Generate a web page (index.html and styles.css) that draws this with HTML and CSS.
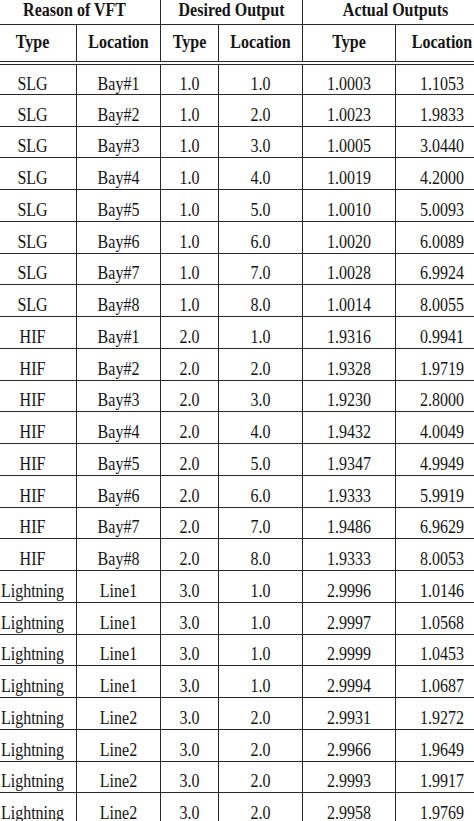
FILE: index.html
```html
<!DOCTYPE html>
<html>
<head>
<meta charset="utf-8">
<link rel="stylesheet" href="styles.css">
</head>
<body>
<table class="vft">
  <colgroup>
    <col class="c-type1"><col class="c-loc1"><col class="c-type2"><col class="c-loc2"><col class="c-type3"><col class="c-loc3">
  </colgroup>
  <thead>
    <tr class="h1">
      <th colspan="2"><span>Reason of VFT</span></th>
      <th colspan="2"><span>Desired Output</span></th>
      <th colspan="2"><span>Actual Outputs</span></th>
    </tr>
    <tr class="h2">
      <th><span>Type</span></th><th><span>Location</span></th><th><span>Type</span></th><th><span>Location</span></th><th><span>Type</span></th><th><span>Location</span></th>
    </tr>
  </thead>
  <tbody>
    <tr><td><span>SLG</span></td><td><span>Bay#1</span></td><td><span>1.0</span></td><td><span>1.0</span></td><td><span>1.0003</span></td><td><span>1.1053</span></td></tr>
    <tr><td><span>SLG</span></td><td><span>Bay#2</span></td><td><span>1.0</span></td><td><span>2.0</span></td><td><span>1.0023</span></td><td><span>1.9833</span></td></tr>
    <tr><td><span>SLG</span></td><td><span>Bay#3</span></td><td><span>1.0</span></td><td><span>3.0</span></td><td><span>1.0005</span></td><td><span>3.0440</span></td></tr>
    <tr><td><span>SLG</span></td><td><span>Bay#4</span></td><td><span>1.0</span></td><td><span>4.0</span></td><td><span>1.0019</span></td><td><span>4.2000</span></td></tr>
    <tr><td><span>SLG</span></td><td><span>Bay#5</span></td><td><span>1.0</span></td><td><span>5.0</span></td><td><span>1.0010</span></td><td><span>5.0093</span></td></tr>
    <tr><td><span>SLG</span></td><td><span>Bay#6</span></td><td><span>1.0</span></td><td><span>6.0</span></td><td><span>1.0020</span></td><td><span>6.0089</span></td></tr>
    <tr><td><span>SLG</span></td><td><span>Bay#7</span></td><td><span>1.0</span></td><td><span>7.0</span></td><td><span>1.0028</span></td><td><span>6.9924</span></td></tr>
    <tr><td><span>SLG</span></td><td><span>Bay#8</span></td><td><span>1.0</span></td><td><span>8.0</span></td><td><span>1.0014</span></td><td><span>8.0055</span></td></tr>
    <tr><td><span>HIF</span></td><td><span>Bay#1</span></td><td><span>2.0</span></td><td><span>1.0</span></td><td><span>1.9316</span></td><td><span>0.9941</span></td></tr>
    <tr><td><span>HIF</span></td><td><span>Bay#2</span></td><td><span>2.0</span></td><td><span>2.0</span></td><td><span>1.9328</span></td><td><span>1.9719</span></td></tr>
    <tr><td><span>HIF</span></td><td><span>Bay#3</span></td><td><span>2.0</span></td><td><span>3.0</span></td><td><span>1.9230</span></td><td><span>2.8000</span></td></tr>
    <tr><td><span>HIF</span></td><td><span>Bay#4</span></td><td><span>2.0</span></td><td><span>4.0</span></td><td><span>1.9432</span></td><td><span>4.0049</span></td></tr>
    <tr><td><span>HIF</span></td><td><span>Bay#5</span></td><td><span>2.0</span></td><td><span>5.0</span></td><td><span>1.9347</span></td><td><span>4.9949</span></td></tr>
    <tr><td><span>HIF</span></td><td><span>Bay#6</span></td><td><span>2.0</span></td><td><span>6.0</span></td><td><span>1.9333</span></td><td><span>5.9919</span></td></tr>
    <tr><td><span>HIF</span></td><td><span>Bay#7</span></td><td><span>2.0</span></td><td><span>7.0</span></td><td><span>1.9486</span></td><td><span>6.9629</span></td></tr>
    <tr><td><span>HIF</span></td><td><span>Bay#8</span></td><td><span>2.0</span></td><td><span>8.0</span></td><td><span>1.9333</span></td><td><span>8.0053</span></td></tr>
    <tr><td><span>Lightning</span></td><td><span>Line1</span></td><td><span>3.0</span></td><td><span>1.0</span></td><td><span>2.9996</span></td><td><span>1.0146</span></td></tr>
    <tr><td><span>Lightning</span></td><td><span>Line1</span></td><td><span>3.0</span></td><td><span>1.0</span></td><td><span>2.9997</span></td><td><span>1.0568</span></td></tr>
    <tr><td><span>Lightning</span></td><td><span>Line1</span></td><td><span>3.0</span></td><td><span>1.0</span></td><td><span>2.9999</span></td><td><span>1.0453</span></td></tr>
    <tr><td><span>Lightning</span></td><td><span>Line1</span></td><td><span>3.0</span></td><td><span>1.0</span></td><td><span>2.9994</span></td><td><span>1.0687</span></td></tr>
    <tr><td><span>Lightning</span></td><td><span>Line2</span></td><td><span>3.0</span></td><td><span>2.0</span></td><td><span>2.9931</span></td><td><span>1.9272</span></td></tr>
    <tr><td><span>Lightning</span></td><td><span>Line2</span></td><td><span>3.0</span></td><td><span>2.0</span></td><td><span>2.9966</span></td><td><span>1.9649</span></td></tr>
    <tr><td><span>Lightning</span></td><td><span>Line2</span></td><td><span>3.0</span></td><td><span>2.0</span></td><td><span>2.9993</span></td><td><span>1.9917</span></td></tr>
    <tr><td><span>Lightning</span></td><td><span>Line2</span></td><td><span>3.0</span></td><td><span>2.0</span></td><td><span>2.9958</span></td><td><span>1.9769</span></td></tr>
  </tbody>
</table>
</body>
</html>
```
FILE: styles.css
```css
html, body {
  margin: 0;
  padding: 0;
  background: #ffffff;
  overflow: hidden;
}

.vft {
  margin-left: -12px;
  margin-top: -2px;
  border-collapse: collapse;
  table-layout: fixed;
  width: 500px;
  font-family: "Liberation Serif", "Times New Roman", serif;
  font-size: 16px;
  color: #141414;
}

.c-type1 { width: 88px; }
.c-loc1 { width: 84px; }
.c-type2 { width: 58px; }
.c-loc2 { width: 84px; }
.c-type3 { width: 93px; }
.c-loc3 { width: 93px; }

.vft th,
.vft td {
  border: 1.5px solid #2a2a2a;
  padding: 0;
  text-align: center;
  vertical-align: middle;
  white-space: nowrap;
  overflow: hidden;
  line-height: 18px;
}

.vft span {
  display: inline-block;
  transform: scaleY(1.14);
  transform-origin: 50% 70%;
}

.vft th {
  font-weight: bold;
}

.h1 { height: 26px; }
.h1 th { padding-bottom: 2px; }

.h2 { height: 38px; }
.h2 th {
  border-bottom: 4.5px double #2a2a2a;
  padding-top: 1px;
}

.vft tbody tr { height: 31.75px; }
.vft tbody td { padding-top: 11px; }
```
